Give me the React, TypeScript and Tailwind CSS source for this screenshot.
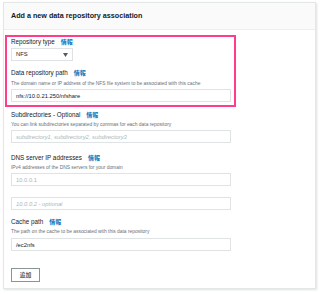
import React from "react";

const Info = () => (
  <span className="ml-[6px] text-[6px] font-bold text-[#0073bb]" style={{}}>
    情報
  </span>
);

function Label({ text, info = true, mt }: { text: string; info?: boolean; mt: string }) {
  return (
    <div className={`${mt} flex h-[8px] items-center text-[6.3px] leading-[8px] text-[#16191f]`}>
      <span>{text}</span>
      {info && <Info />}
    </div>
  );
}

function Desc({ text, mt }: { text: string; mt: string }) {
  return <div className={`${mt} h-[6px] text-[4.9px] leading-[6px] text-[#687078] whitespace-nowrap`}>{text}</div>;
}

function Field({ value, placeholder, italic, mt }: { value?: string; placeholder?: string; italic?: boolean; mt: string }) {
  return (
    <div className={`${mt} flex h-[13px] w-[220px] items-center border border-[#dfe3e3] bg-white pl-[4px] text-[5.8px] leading-[8px]`}>
      {value ? (
        <span className="text-[#16191f]">{value}</span>
      ) : (
        <span className={`text-[#aab7b8] ${italic ? "italic" : ""}`}>{placeholder}</span>
      )}
    </div>
  );
}

export default function App() {
  return (
    <div
      className="h-[294px] w-[320px] bg-white pl-[3px] pt-[2px]"
      style={{ fontFamily: '"Liberation Sans", "Noto Sans CJK JP", sans-serif' }}
    >
      <div className="h-[287px] w-[313px] border border-[#e4e7e7] bg-white shadow-[1px_1px_2px_rgba(0,0,0,0.12)]">
        <div className="flex h-[27px] items-center border-b border-[#eeeeee] bg-[#fafafa] pl-[7px]">
          <span className="text-[7.2px] font-bold text-[#16191f]">Add a new data repository association</span>
        </div>
        <div className="pl-[1px]">
          <div className="mt-[5px] h-[72px] w-[231px] border-2 border-[#ff3d8b] pl-[4px] pt-[1px]">
            <Label text="Repository type" mt="mt-0" />
            <div className="mt-[2px] flex h-[13px] w-[62px] items-center justify-between border border-[#dfe3e3] bg-white pl-[4px] pr-[4px] text-[5.8px] text-[#16191f]">
              <span>NFS</span>
              <svg width="5" height="4" viewBox="0 0 5 4">
                <path d="M0 0 L5 0 L2.5 4 Z" fill="#545b64" />
              </svg>
            </div>
            <Label text="Data repository path" mt="mt-[8px]" />
            <Desc text="The domain name or IP address of the NFS file system to be associated with this cache" mt="mt-[4px]" />
            <Field value="nfs://10.0.21.250/nfshare" mt="mt-[2px]" />
          </div>
          <div className="pl-[6px]">
            <Label text="Subdirectories - Optional" mt="mt-[4px]" />
            <Desc text="You can link subdirectories separated by commas for each data repository" mt="mt-[3px]" />
            <Field placeholder="subdirectory1, subdirectory2, subdirectory3" italic mt="mt-[2px]" />
            <Label text="DNS server IP addresses" mt="mt-[11px]" />
            <Desc text="IPv4 addresses of the DNS servers for your domain" mt="mt-[3px]" />
            <Field placeholder="10.0.0.1" mt="mt-[2px]" />
            <Field placeholder="10.0.0.2 - optional" italic mt="mt-[11px]" />
            <Label text="Cache path" mt="mt-[8px]" />
            <Desc text="The path on the cache to be associated with this data repository" mt="mt-[3px]" />
            <Field value="/ec2nfs" mt="mt-[3px]" />
            <div className="mt-[17px] flex h-[14px] w-[29px] items-center justify-center border border-[#879596] bg-white text-[5.8px] font-bold text-[#545b64]">
              追加
            </div>
          </div>
        </div>
      </div>
    </div>
  );
}
